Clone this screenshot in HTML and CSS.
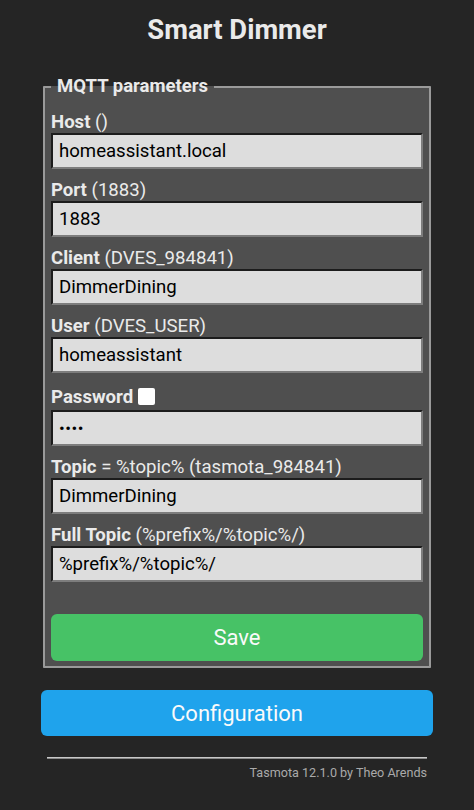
FILE: index.html
```html
<!DOCTYPE html>
<html lang="en">
<head>
    <meta charset="UTF-8">
    <title>Smart Dimmer - MQTT</title>
    <link rel="stylesheet" href="styles.css">
</head>
<body>
    <div class="page">
        <h2 class="title">Smart Dimmer</h2>

        <fieldset class="params">
            <legend>MQTT parameters</legend>
            <div class="fields">
                <div class="field">
                    <label for="mh"><b>Host</b> ()</label>
                    <input id="mh" type="text" value="homeassistant.local">
                </div>
                <div class="field">
                    <label for="ml"><b>Port</b> (1883)</label>
                    <input id="ml" type="text" value="1883">
                </div>
                <div class="field">
                    <label for="mc"><b>Client</b> (DVES_984841)</label>
                    <input id="mc" type="text" value="DimmerDining">
                </div>
                <div class="field">
                    <label for="mu"><b>User</b> (DVES_USER)</label>
                    <input id="mu" type="text" value="homeassistant">
                </div>
                <div class="field">
                    <label class="pwlabel" for="mp"><b>Password</b> <span class="check"></span></label>
                    <input id="mp" type="password" value="••••">
                </div>
                <div class="field">
                    <label for="mt"><b>Topic</b> = %topic% (tasmota_984841)</label>
                    <input id="mt" type="text" value="DimmerDining">
                </div>
                <div class="field">
                    <label for="mf"><b>Full Topic</b> (%prefix%/%topic%/)</label>
                    <input id="mf" type="text" value="%prefix%/%topic%/">
                </div>
            </div>
            <button class="btn save">Save</button>
        </fieldset>

        <button class="btn config">Configuration</button>

        <hr>
        <div class="footer">Tasmota 12.1.0 by Theo Arends</div>
    </div>
</body>
</html>
```

FILE: styles.css
```css
body {
    margin: 0;
    background-color: #252525;
    color: #eaeaea;
    font-family: Roboto, "Liberation Sans", sans-serif;
}

.page {
    width: 392px;
    margin: 0 auto;
}

.title {
    margin: 0;
    padding-top: 13px;
    font-size: 27.4px;
    line-height: 34px;
    text-align: center;
    color: #eaeaea;
}

.params {
    margin: 29px 2px 0;
    padding: 0 6px 5px;
    background-color: #4f4f4f;
    border: 2px solid #9a9a9a;
    border-radius: 1px;
}

.params legend {
    padding: 0 6px;
    font-size: 18.5px;
    font-weight: bold;
    line-height: 21px;
}

.fields {
    padding-top: 14px;
}

.field {
    margin-bottom: 10px;
}

.field label {
    display: block;
    font-size: 18.6px;
    line-height: 22px;
}

.field label.pwlabel {
    display: flex;
    align-items: center;
    gap: 5px;
    height: 27px;
}

.check {
    display: inline-block;
    width: 17px;
    height: 17px;
    background-color: #fff;
    border-radius: 2px;
}

.field input {
    display: block;
    box-sizing: border-box;
    width: 100%;
    height: 36px;
    margin: 0;
    padding: 0 6px;
    font-family: Roboto, "Liberation Sans", sans-serif;
    font-size: 18.6px;
    color: #000;
    background-color: #dddddd;
    border-style: solid;
    border-width: 2px;
    border-color: #1c1c1c #7d7d7d #7d7d7d #1c1c1c;
    outline: none;
}

.field input[type=password] {
    font-size: 17px;
    letter-spacing: 0.5px;
}

.btn {
    display: block;
    width: 100%;
    border: none;
    border-radius: 6px;
    font-family: Roboto, "Liberation Sans", sans-serif;
    font-size: 22px;
    color: #fafafa;
    cursor: pointer;
}

.save {
    margin-top: 32px;
    height: 47px;
    background-color: #47c266;
}

.config {
    margin-top: 22px;
    height: 46px;
    background-color: #1fa3ec;
}

hr {
    margin: 21px 6px 0;
    border: none;
    border-top: 1px solid #c8c8c8;
    border-bottom: 1px solid #8a8a8a;
}

.footer {
    margin-top: 6px;
    padding-right: 6px;
    text-align: right;
    font-size: 12.6px;
    color: #aaaaaa;
}
```
